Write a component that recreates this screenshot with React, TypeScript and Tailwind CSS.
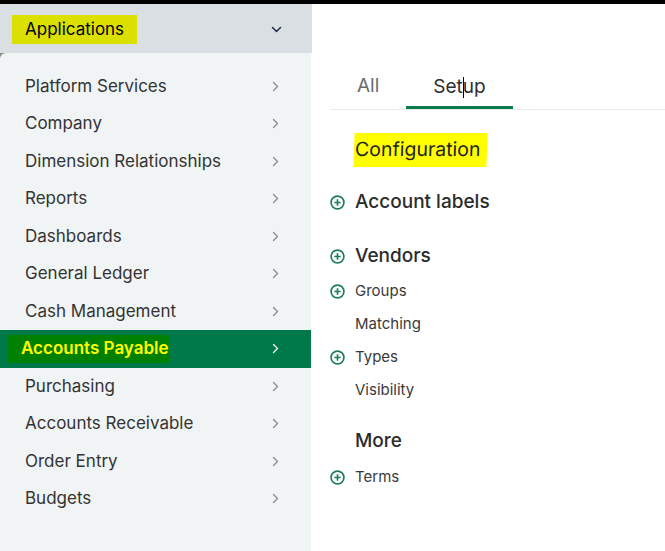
import React from "react"

const menuItems = [
  "Platform Services",
  "Company",
  "Dimension Relationships",
  "Reports",
  "Dashboards",
  "General Ledger",
  "Cash Management",
  "Accounts Payable",
  "Purchasing",
  "Accounts Receivable",
  "Order Entry",
  "Budgets",
]

const ACTIVE = "Accounts Payable"

function ChevronRight({ color }: { color: string }) {
  return (
    <svg width="7" height="11" viewBox="0 0 7 11" fill="none">
      <path d="M1.5 1.5l4 4-4 4" stroke={color} strokeWidth="1.3" strokeLinecap="round" strokeLinejoin="round" />
    </svg>
  )
}

function ChevronDown() {
  return (
    <svg width="11" height="7" viewBox="0 0 11 7" fill="none">
      <path d="M1.5 1.5l4 4 4-4" stroke="#1d2b4a" strokeWidth="1.5" strokeLinecap="round" strokeLinejoin="round" />
    </svg>
  )
}

function PlusCircle() {
  return (
    <svg width="15" height="15" viewBox="0 0 15 15" fill="none" className="shrink-0">
      <circle cx="7.5" cy="7.5" r="6.4" stroke="#1f7d5c" strokeWidth="1.7" />
      <path d="M7.5 4.3v6.4M4.3 7.5h6.4" stroke="#1f7d5c" strokeWidth="1.7" />
    </svg>
  )
}

function Row({ label, plus, size }: { label: string; plus?: boolean; size: "lg" | "sm" }) {
  return (
    <div className={size === "lg" ? "flex h-[28px] items-center" : "flex h-[33px] items-center"}>
      <div className="flex w-[25px] shrink-0 items-center">{plus && <PlusCircle />}</div>
      <span
        className={
          size === "lg"
            ? "text-[19px] font-medium text-[#2b2b2b]"
            : "text-[15px] text-[#3a3a3a]"
        }
      >
        {label}
      </span>
    </div>
  )
}

export default function App() {
  return (
    <div
      className="flex h-[551px] w-[665px] flex-col overflow-hidden bg-white"
      style={{ fontFamily: 'Inter, "Liberation Sans", Arial, sans-serif' }}
    >
      <div className="h-[4px] w-full shrink-0 bg-black" />

      <div className="flex flex-1">
        {/* sidebar */}
        <div className="flex w-[311px] shrink-0 flex-col bg-[#8d8d8d]">
          <div className="flex h-[49px] w-[312px] shrink-0 items-center justify-between bg-[#d9dfe3] pl-[12px] pr-[30px] pt-[2px]">
            <span className="bg-[#dce000] px-[13px] py-[2px] text-[17px] text-black">Applications</span>
            <ChevronDown />
          </div>

          <div className="flex-1 rounded-tl-[6px] bg-[#f1f4f5] pt-[14.5px]">
            {menuItems.map((item) => {
              const isActive = item === ACTIVE
              return (
                <div
                  key={item}
                  className={
                    isActive
                      ? "flex h-[37.5px] items-center justify-between bg-[#00794a] pl-[8px] pr-[32px]"
                      : "flex h-[37.5px] items-center justify-between pl-[25px] pr-[32px]"
                  }
                >
                  {isActive ? (
                    <span className="flex h-[28px] items-center bg-[#008000] pl-[13px] text-[17px] font-semibold text-[#ffff00]">
                      {item}
                    </span>
                  ) : (
                    <span className="text-[17px] text-[#333333]">{item}</span>
                  )}
                  <ChevronRight color={isActive ? "#ffffff" : "#8a8a8a"} />
                </div>
              )
            })}
          </div>
        </div>

        {/* content */}
        <div className="flex flex-1 flex-col pl-[19px]">
          <div className="mt-[58px] flex h-[48px] border-b border-[#ebebeb]">
            <div className="flex items-center px-[27px] pt-[2px] text-[19px] text-[#6b6b6b]">All</div>
            <div className="flex items-center border-b-[3px] border-[#0a7a4a] px-[27px] pt-[6px] text-[19px] text-[#2e2e2e]">
              Set
              <span className="-mr-px inline-block h-[21px] w-px bg-black" />
              up
            </div>
          </div>

          <div className="mt-[26px] flex h-[28px] items-center pl-[25px]">
            <span className="-ml-[1px] -skew-x-2 bg-[#ffff00] pl-[1px] pr-[6px] pt-[2px] pb-[3px] text-[19.5px] text-[#222222]">
              Configuration
            </span>
          </div>

          <div className="mt-[24px]">
            <Row label="Account labels" plus size="lg" />
          </div>

          <div className="mt-[26px]">
            <Row label="Vendors" plus size="lg" />
          </div>
          <div className="mt-[5px]">
            <Row label="Groups" plus size="sm" />
            <Row label="Matching" size="sm" />
            <Row label="Types" plus size="sm" />
            <Row label="Visibility" size="sm" />
          </div>

          <div className="mt-[20px]">
            <Row label="More" size="lg" />
          </div>
          <div className="mt-[6px]">
            <Row label="Terms" plus size="sm" />
          </div>
        </div>
      </div>
    </div>
  )
}
